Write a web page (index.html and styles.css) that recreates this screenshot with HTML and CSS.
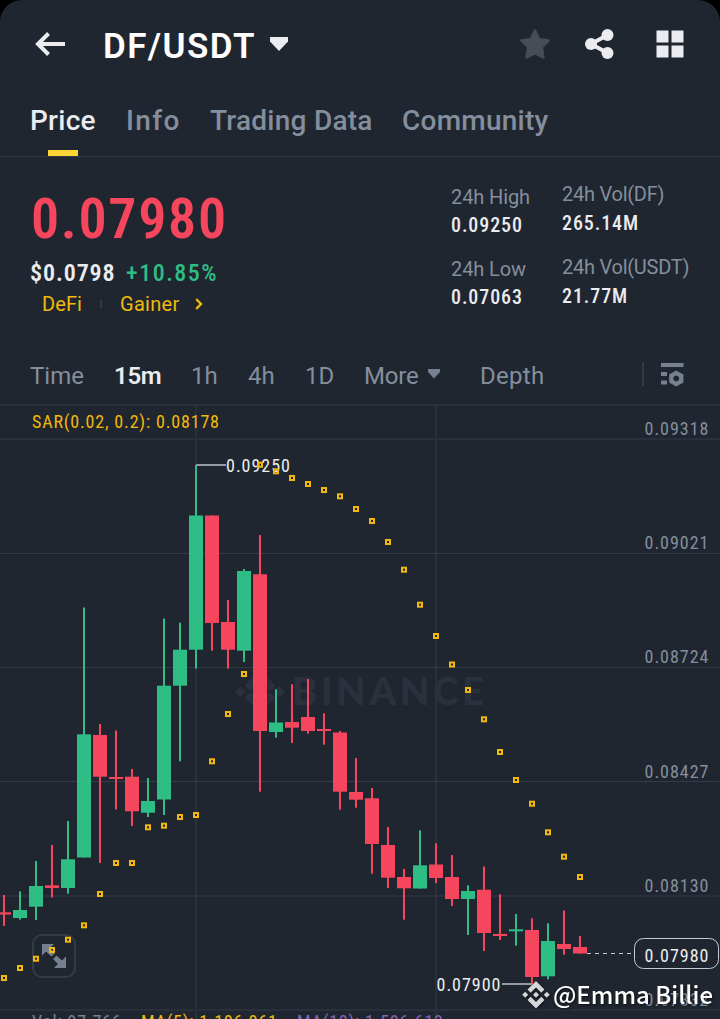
FILE: index.html
```html
<!DOCTYPE html>
<html lang="en">
<head>
    <title>DF/USDT</title>
    <meta name="viewport" content="width=device-width, initial-scale=1">
    <meta charset="UTF-8">
    <link rel="stylesheet" href="styles.css">
</head>
<body>
<div class="app">
    <div class="top-bar">
        <svg class="back" width="30" height="24" viewBox="0 0 30 24">
            <path d="M30 12H3M13.500 1.500L3 12l10.500 10.500" fill="none" stroke="#eaecef" stroke-width="4"/>
        </svg>
        <h1 class="pair">DF/USDT</h1>
        <svg class="pair-arrow" width="18" height="14" viewBox="0 0 18 14">
            <path d="M0 0h18v4.500L9 14 0 4.500z" fill="#eaecef"/>
        </svg>
        <div class="actions">
            <svg width="30" height="30" viewBox="0 0 30 30">
                <path d="M15 1.500l4.200 8.700 9.300 1.300-6.700 6.700 1.600 10.300L15 24.200l-8.400 4.300 1.600-10.300L1.500 11.500l9.300-1.300z" fill="#474d57" stroke="#474d57" stroke-width="2.500" stroke-linejoin="round"/>
            </svg>
            <svg width="30" height="30" viewBox="0 0 30 30">
                <path d="M22.500 6L6 15l16.500 9" fill="none" stroke="#eaecef" stroke-width="4"/>
                <circle cx="22.500" cy="6" r="6" fill="#eaecef"/>
                <circle cx="6" cy="15" r="6" fill="#eaecef"/>
                <circle cx="22.500" cy="24" r="6" fill="#eaecef"/>
            </svg>
            <svg width="28" height="28" viewBox="0 0 28 28">
                <path d="M.5.500h12v12H.5zM15.500.500h12v12h-12zM.5 15.500h12v12H.5zM15.500 15.500h12v12h-12z" fill="#eaecef"/>
            </svg>
        </div>
    </div>

    <div class="tabs">
        <div class="tab tab-price active">Price</div>
        <div class="tab tab-info">Info</div>
        <div class="tab tab-data">Trading Data</div>
        <div class="tab tab-community">Community</div>
    </div>

    <div class="summary">
        <div class="price-box">
            <div class="last-price">0.07980</div>
            <div class="sub-price"><span class="usd">$0.0798</span><span class="change">+10.85%</span></div>
            <div class="tags">
                <span class="tag-defi">DeFi</span>
                <span class="tag-line"></span>
                <span class="tag-gainer">Gainer</span>
                <svg width="8" height="12" viewBox="0 0 8 12">
                    <path d="M1.200 1.200L6 6l-4.800 4.800" fill="none" stroke="#f0b90b" stroke-width="2.400"/>
                </svg>
            </div>
        </div>
        <div class="stats stats-price">
            <div class="label high">24h High</div>
            <div class="value">0.09250</div>
            <div class="label low">24h Low</div>
            <div class="value">0.07063</div>
        </div>
        <div class="stats stats-vol">
            <div class="label vol">24h Vol(DF)</div>
            <div class="value">265.14M</div>
            <div class="label vol">24h Vol(USDT)</div>
            <div class="value">21.77M</div>
        </div>
    </div>

    <div class="intervals">
        <span class="int-time">Time</span>
        <span class="int-15m active">15m</span>
        <span class="int-1h">1h</span>
        <span class="int-4h">4h</span>
        <span class="int-1d">1D</span>
        <span class="int-more">More</span>
        <svg class="more-arrow" width="12" height="10" viewBox="0 0 12 10">
            <path d="M0 0h12v3L6 9.500 0 3z" fill="#76808f"/>
        </svg>
        <span class="int-depth">Depth</span>
        <div class="int-settings">
            <svg width="24" height="26" viewBox="0 0 24 26">
                <path d="M1 1h22.500v4H1zM1 10h6v4H1zM1 18.500h6v4H1z" fill="#76808f"/>
                <path fill-rule="evenodd" d="M16.200 8.500l7.200 4v8l-7.200 4-7-4v-8zM16.200 13.500a3 3 0 1 0 .01 0z" fill="#76808f"/>
            </svg>
        </div>
    </div>

    <svg id="chart" class="chart" width="720" height="615" viewBox="0 404 720 615">
        <g class="grid">
            <path class="thick" d="M0 405H720M0 439H720M0 896H720M0 1010H720M196 406V1019M436 406V1019"/>
            <path d="M0 553.500H720M0 667.500H720M0 781.500H720"/>
        </g>

        <g class="watermark">
            <path d="M260 670.500l15.500 15-5.500 5.500-10-9.500-10 9.500-5.500-5.500zM260 712.500l15.500-15-5.500-5.500-10 9.500-10-9.500-5.500 5.500zM240.500 686l5.500 5.500-5.500 5.500-5.500-5.500zM279.500 686l5.500 5.500-5.500 5.500-5.500-5.500zM260 686l5.500 5.500-5.500 5.500-5.500-5.500z"/>
            <text x="292" y="705" textLength="192">BINANCE</text>
        </g>

        <text class="sar-label" x="32" y="428" textLength="187">SAR(0.02, 0.2): 0.08178</text>

        <g class="axis">
            <text x="644.500" y="435" textLength="64">0.09318</text>
            <text x="644.500" y="549" textLength="64">0.09021</text>
            <text x="644.500" y="663" textLength="64">0.08724</text>
            <text x="644.500" y="778" textLength="64">0.08427</text>
            <text x="644.500" y="892" textLength="64">0.08130</text>
            <text x="644.500" y="1006" textLength="64">0.07832</text>
        </g>

        <g class="fullscreen">
            <rect x="33" y="935" width="42" height="42" rx="9"/>
            <path d="M42 944h12l-4 4 5 5-3.500 3.500-5.500-5-4 4zM66 968H54l4-4-5-5 3.500-3.500 5.500 5 4-4z"/>
        </g>

        <g id="candles"></g>

        <g class="marks">
            <path d="M196 465H226M502 984H532"/>
            <text x="226" y="472" textLength="64">0.09250</text>
            <text x="436.500" y="991" textLength="64">0.07900</text>
        </g>

        <g id="sar" class="sar"></g>

        <g class="current">
            <path d="M587 953.500H634"/>
            <rect x="634.500" y="938.500" width="84" height="30" rx="9"/>
            <text x="644.500" y="962" textLength="64">0.07980</text>
        </g>

        <g class="volume">
            <text x="32" y="1028" textLength="89" fill="#76808f">Vol: 97.766</text>
            <text x="141" y="1028" textLength="136" fill="#f0b90b">MA(5): 1.196.961</text>
            <text x="297" y="1028" textLength="146" fill="#8661b5">MA(10): 1.586.613</text>
        </g>

        <g class="author">
            <path d="M536 981l8.500 8.500-3.200 3.200-5.300-5.300-5.300 5.300-3.200-3.200zM536 1008.500l8.500-8.500-3.200-3.200-5.300 5.300-5.300-5.300-3.200 3.200zM525.200 991.800l3 3-3 3-3-3zM546.800 991.800l3 3-3 3-3-3zM536 991.800l3 3-3 3-3-3z" fill="#d5d6d8"/>
            <text x="553" y="1004" textLength="160">@Emma Billie</text>
        </g>
    </svg>
</div>

<script>
    // [high, body top, body bottom, low, up]
    const candles = [
        [895, 912.3, 914.5, 926, 0],
        [891.3, 910, 918, 919.7, 1],
        [861, 886, 906.7, 920, 1],
        [845, 885.3, 888, 897.5, 0],
        [821, 859.3, 888, 893.7, 1],
        [607.5, 734.3, 857.5, 857.5, 1],
        [724, 735, 776.7, 863, 0],
        [730.5, 777, 779, 809.5, 0],
        [769, 776.7, 811.3, 826, 0],
        [778, 801, 812.7, 817, 1],
        [618.5, 685.7, 799.5, 815, 1],
        [622.7, 649.7, 685.7, 761.3, 1],
        [465, 515.5, 649.7, 668.7, 1],
        [515.5, 515.5, 623, 650.7, 0],
        [600, 622, 649.7, 668.7, 0],
        [569, 571, 650.7, 662, 1],
        [535, 574.3, 731, 791.7, 0],
        [689.3, 722.5, 732, 737.7, 1],
        [684.3, 722, 727.7, 743, 0],
        [679, 717, 731, 733.7, 0],
        [713.3, 729, 731, 744.7, 0],
        [731, 732.5, 791.7, 809.7, 0],
        [758, 792, 799.7, 807.7, 0],
        [788, 798.3, 844, 873.7, 0],
        [827, 845, 877.7, 888, 0],
        [869, 877, 888.3, 919.7, 0],
        [830.3, 865.3, 888.5, 888.5, 1],
        [843.3, 864.5, 878, 883, 0],
        [855, 877, 899, 906, 0],
        [885.3, 891, 899, 935, 1],
        [866.5, 889.7, 933, 951, 0],
        [894.3, 934, 936, 940, 0],
        [914, 929.3, 931.3, 945.7, 1],
        [918.3, 930, 977, 984, 0],
        [923.3, 941, 976.3, 979.3, 1],
        [910.5, 944, 949, 954.7, 0],
        [936, 947, 953.5, 953.5, 0]
    ];

    const sar = [
        978, 968, 958.7, 950, 939.7, 925.3, 894, 863, 863, 827.3, 825.7, 817, 815,
        761.3, 714, 674, 464.7, 471.3, 478, 484, 490, 496.3, 509, 521, 542, 569.7,
        604.7, 636, 664.5, 690, 719.3, 752, 780, 803.7, 832.3, 856.7, 877
    ];

    function addRect(parent, x, y, width, height, cls) {
        const rect = document.createElementNS("http://www.w3.org/2000/svg", "rect");
        rect.setAttribute("x", x);
        rect.setAttribute("y", y);
        rect.setAttribute("width", width);
        rect.setAttribute("height", height);
        rect.setAttribute("class", cls);
        parent.appendChild(rect);
    }

    const candleGroup = document.getElementById("candles");
    candles.forEach(([high, top, bottom, low, up], i) => {
        const x = 4 + i * 16;
        const cls = up ? "up" : "down";
        addRect(candleGroup, x - 1, high, 2, low - high, cls);
        addRect(candleGroup, x - 7, top, 14, bottom - top, cls);
    });

    const sarGroup = document.getElementById("sar");
    sar.forEach((y, i) => addRect(sarGroup, 2 + i * 16, y - 2, 4, 4, "dot"));
</script>
</body>
</html>
```
FILE: styles.css
```css
* {
    box-sizing: border-box;
}
body {
    margin: 0;
    background-color: #000;
    font-family: Roboto, "Liberation Sans", sans-serif;
}
.app {
    width: 720px;
    height: 1019px;
    overflow: hidden;
    background-color: #202630;
    border-radius: 22px 22px 0 0;
}
svg {
    display: block;
    flex-shrink: 0;
}

/* header */
.top-bar {
    display: flex;
    align-items: center;
    height: 88px;
    padding: 0 36px 0 35px;
}
.pair {
    width: 167px;
    margin: 5px 0 0 38px;
    color: #fff;
    font-size: 35px;
    font-weight: 600;
    line-height: 42px;
    letter-spacing: 1.4px;
    white-space: nowrap;
}
.actions {
    display: flex;
    align-items: center;
    gap: 35px;
    margin-left: auto;
}
.actions svg:last-child {
    margin-left: 6px;
}
.tabs {
    display: flex;
    height: 69px;
    padding-left: 30px;
    border-bottom: 1px solid #333b47;
    color: #848e9c;
    font-size: 28px;
    font-weight: 500;
    line-height: 66px;
    white-space: nowrap;
    letter-spacing: .25px;
}
.tab {
    height: 68px;
}
.tab-price { width: 96px; }
.tab-info {
    width: 84px;
    letter-spacing: 1.4px;
}
.tab-data { width: 192px; }
.tab.active {
    color: #eaecef;
}
.tab.active::after {
    content: "";
    display: block;
    width: 30px;
    height: 6px;
    margin: -4px 0 0 18px;
    background-color: #fcd535;
}

/* price and 24h stats */
.summary {
    display: flex;
    height: 191px;
    padding-left: 30px;
    white-space: nowrap;
}
.price-box {
    width: 421px;
    padding-top: 29px;
}
.last-price {
    height: 66px;
    padding-left: 1px;
    color: #f6465d;
    font-size: 56px;
    font-stretch: 85%;
    font-weight: 600;
    line-height: 66px;
    letter-spacing: 1.7px;
}
.sub-price {
    display: flex;
    height: 40px;
    font-size: 24px;
    font-stretch: 85%;
    line-height: 42px;
}
.usd {
    width: 96px;
    color: #eaecef;
    font-weight: 600;
    letter-spacing: .9px;
}
.change {
    color: #2ebd85;
    font-weight: 500;
    letter-spacing: 1.5px;
}
.tags {
    display: flex;
    align-items: center;
    height: 24px;
    padding-left: 12px;
    color: #f0b90b;
    font-size: 20px;
}
.tag-defi {
    width: 58px;
    letter-spacing: .1px;
}
.tag-line {
    width: 2px;
    height: 8px;
    background-color: #333b47;
}
.tag-gainer {
    width: 75px;
    margin-left: 18px;
    letter-spacing: .3px;
}
.label {
    height: 28px;
    color: #848e9c;
    font-size: 20px;
    line-height: 28px;
    letter-spacing: -.1px;
}
.label.vol {
    letter-spacing: -.25px;
}
.value {
    height: 44px;
    color: #eaecef;
    font-size: 20px;
    font-stretch: 85%;
    font-weight: 500;
    line-height: 28px;
    letter-spacing: .9px;
}
.stats-price {
    width: 111px;
    padding-top: 26px;
}
.stats-vol {
    padding-top: 23px;
}
.stats-vol .value {
    height: 45px;
    line-height: 30px;
}

/* chart intervals */
.intervals {
    display: flex;
    height: 56px;
    padding-left: 30px;
    color: #848e9c;
    font-size: 24px;
    line-height: 56px;
    white-space: nowrap;
}
.int-time { width: 84px; }
.int-15m { width: 77px; }
.int-1h { width: 57px; }
.int-4h { width: 57px; }
.int-1d { width: 59px; }
.int-more {
    width: 64px;
    letter-spacing: -.2px;
}
.int-depth {
    width: 162px;
    margin-left: 40px;
    letter-spacing: .3px;
}
.intervals .active {
    color: #eaecef;
    font-weight: 600;
    letter-spacing: -.3px;
}
.more-arrow {
    margin-top: 21px;
}
.int-settings {
    height: 24px;
    margin-top: 14px;
    padding-left: 16px;
    border-left: 2px solid #333b47;
}

/* chart */
.chart text {
    font-size: 18px;
    font-stretch: 85%;
}
.grid path {
    stroke: #333b47;
    stroke-width: 1;
}
.grid .thick {
    stroke: #29303b;
    stroke-width: 2;
}
.watermark {
    fill: #2b313c;
}
.chart .watermark text {
    font-family: Lato, sans-serif;
    font-size: 38px;
    font-weight: 900;
}
.sar-label {
    fill: #f0b90b;
}
.axis {
    fill: #848e9c;
}
.fullscreen rect {
    fill: none;
    stroke: #333b47;
    stroke-width: 2;
}
.fullscreen path {
    fill: #76808f;
}
.up { fill: #2ebd85; }
.down { fill: #f6465d; }
.dot {
    fill: none;
    stroke: #f0b90b;
    stroke-width: 2;
}
.marks path {
    stroke: #929aa5;
    stroke-width: 2;
}
.marks text,
.current text {
    fill: #eaecef;
}
.current rect {
    fill: #202630;
    stroke: #c5cad2;
}
.current path {
    stroke: #c5cad2;
    stroke-dasharray: 4 4;
}
.chart .author text {
    fill: #fff;
    font-family: "Noto Sans CJK SC", "Noto Sans", sans-serif;
    font-size: 24px;
    font-weight: 500;
}
.author {
    filter: drop-shadow(1px 1px 1px rgba(0,0,0,.6));
}
```
